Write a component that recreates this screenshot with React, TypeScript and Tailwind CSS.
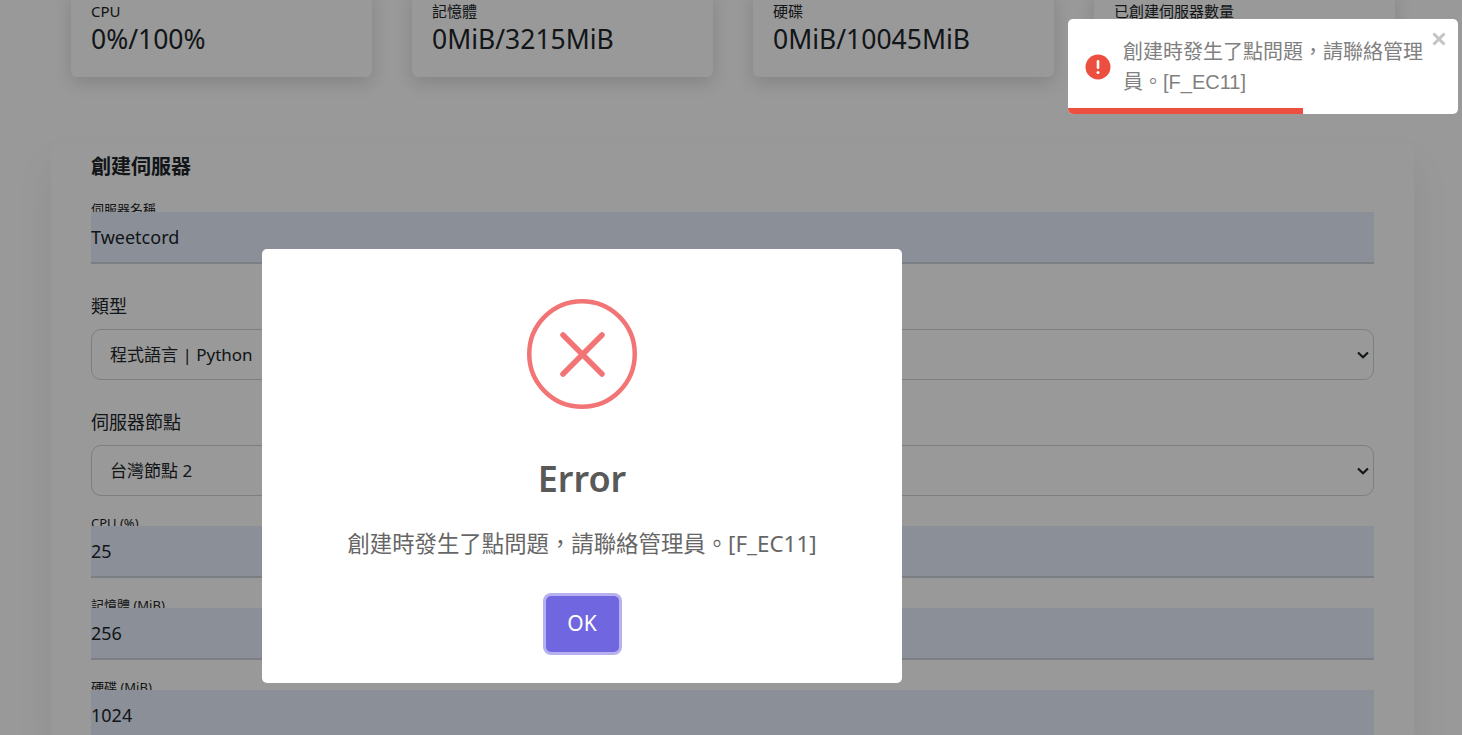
const font = "font-['Noto_Sans','Noto_Sans_CJK_TC',sans-serif]";

const stats = [
  { label: "CPU", value: "0%/100%" },
  { label: "記憶體", value: "0MiB/3215MiB" },
  { label: "硬碟", value: "0MiB/10045MiB" },
  { label: "已創建伺服器數量", value: "0/1" },
];

// floating label sits mostly under the input, only its top shows
const Field = ({ label, value }: { label: string; value: string }) => (
  <div className="mb-[30px]">
    <label className="-mt-[9px] block h-[9px] text-[13px] leading-[13px] text-[#212529]">{label}</label>
    <input
      readOnly
      value={value}
      className="relative block h-[52px] w-full border-b-2 border-[#ced4da] bg-[#e8f0fe] text-[18px] text-[#212529] outline-none"
    />
  </div>
);

const Picker = ({ label, value }: { label: string; value: string }) => (
  <div className="mb-[30px]">
    <label className="mb-[11px] block h-[24px] text-[18px] leading-[24px] text-[#212529]">{label}</label>
    <div className="relative">
      <select className="block h-[51px] w-full appearance-none rounded-[10px] border border-[#ced4da] bg-white pl-[18px] text-[17px] text-[#212529]">
        <option>{value}</option>
      </select>
      <svg width="12" height="8" viewBox="0 0 12 8" fill="none" stroke="#212529" strokeWidth="2.2" className="absolute right-[5px] top-[22px]">
        <path d="M1 1.5L6 6.2L11 1.5" />
      </svg>
    </div>
  </div>
);

export default function App() {
  return (
    <div className={`relative h-[735px] w-[1462px] overflow-hidden bg-white ${font}`}>
      {/* page behind the dialog, scrolled down a bit */}
      <div className="-mt-[10px]">
        <div className="flex gap-[40px] pl-[71px]">
          {stats.map((s) => (
            <div key={s.label} className="h-[87px] w-[301px] rounded-[6px] bg-white px-[20px] pt-[10px] shadow-[0_6px_18px_rgba(0,0,0,0.14)]">
              <div className="text-[15px] leading-[22px] text-[#212529]">{s.label}</div>
              <div className="mt-[1px] text-[26.5px] leading-[32px] text-[#212529]">{s.value}</div>
            </div>
          ))}
        </div>
        <div className="ml-[51px] mt-[68px] w-[1363px] rounded-[6px] bg-white px-[40px] pt-[9px] shadow-[0_20px_40px_rgba(0,0,0,0.07)]">
          <h2 className="mb-[32px] text-[20px] font-bold leading-[26px] text-[#212529]">創建伺服器</h2>
          <Field label="伺服器名稱" value="Tweetcord" />
          <Picker label="類型" value="程式語言 | Python" />
          <Picker label="伺服器節點" value="台灣節點 2" />
          <Field label="CPU (%)" value="25" />
          <Field label="記憶體 (MiB)" value="256" />
          <Field label="硬碟 (MiB)" value="1024" />
        </div>
      </div>

      <div className="absolute inset-0 bg-black/40" />

      {/* error dialog */}
      <div className="absolute left-[262px] top-[249px] flex h-[434px] w-[640px] flex-col items-center rounded-[5px] bg-white pt-[50px]">
        <svg width="110" height="110" viewBox="0 0 110 110" fill="none" stroke="#f27474">
          <circle cx="55" cy="55" r="52.75" strokeWidth="4.5" />
          <path d="M36 36L75 75M75 36L36 75" strokeWidth="5.5" strokeLinecap="round" />
        </svg>
        <h2 className="mt-[42px] text-[36px] font-semibold leading-[56px] text-[#595959]">Error</h2>
        <p className="mt-[21px] text-[22.4px] leading-[32px] text-[#666666]">創建時發生了點問題，請聯絡管理員。[F_EC11]</p>
        <button className="mt-[36px] h-[56px] w-[73px] rounded-[5px] bg-[#7066e0] text-[21px] text-white ring-[3px] ring-[#7066e0]/50">
          OK
        </button>
      </div>

      {/* toast */}
      <div className="absolute left-[1068px] top-[19px] flex h-[95px] w-[390px] items-center overflow-hidden rounded-[5px] bg-white pl-[17px] pr-[30px] font-['Liberation_Sans','Noto_Sans_CJK_TC',sans-serif]">
        <svg width="26" height="26" viewBox="0 0 26 26" className="shrink-0">
          <circle cx="13" cy="13" r="12.5" fill="#ec4f40" />
          <rect x="11.7" y="6" width="2.6" height="9" rx="1.3" fill="#fff" />
          <circle cx="13" cy="18.6" r="1.5" fill="#fff" />
        </svg>
        <p className="ml-[12px] text-[20px] leading-[30px] text-[#808080]">創建時發生了點問題，請聯絡管理員。[F_EC11]</p>
        <svg width="14" height="14" viewBox="0 0 14 14" className="absolute right-[12px] top-[13px]" stroke="#c4c4c4" strokeWidth="3">
          <path d="M1.5 1.5L12.5 12.5M12.5 1.5L1.5 12.5" />
        </svg>
        <div className="absolute bottom-0 left-0 h-[6px] w-[235px] bg-[#ec4f40]" />
      </div>
    </div>
  );
}
